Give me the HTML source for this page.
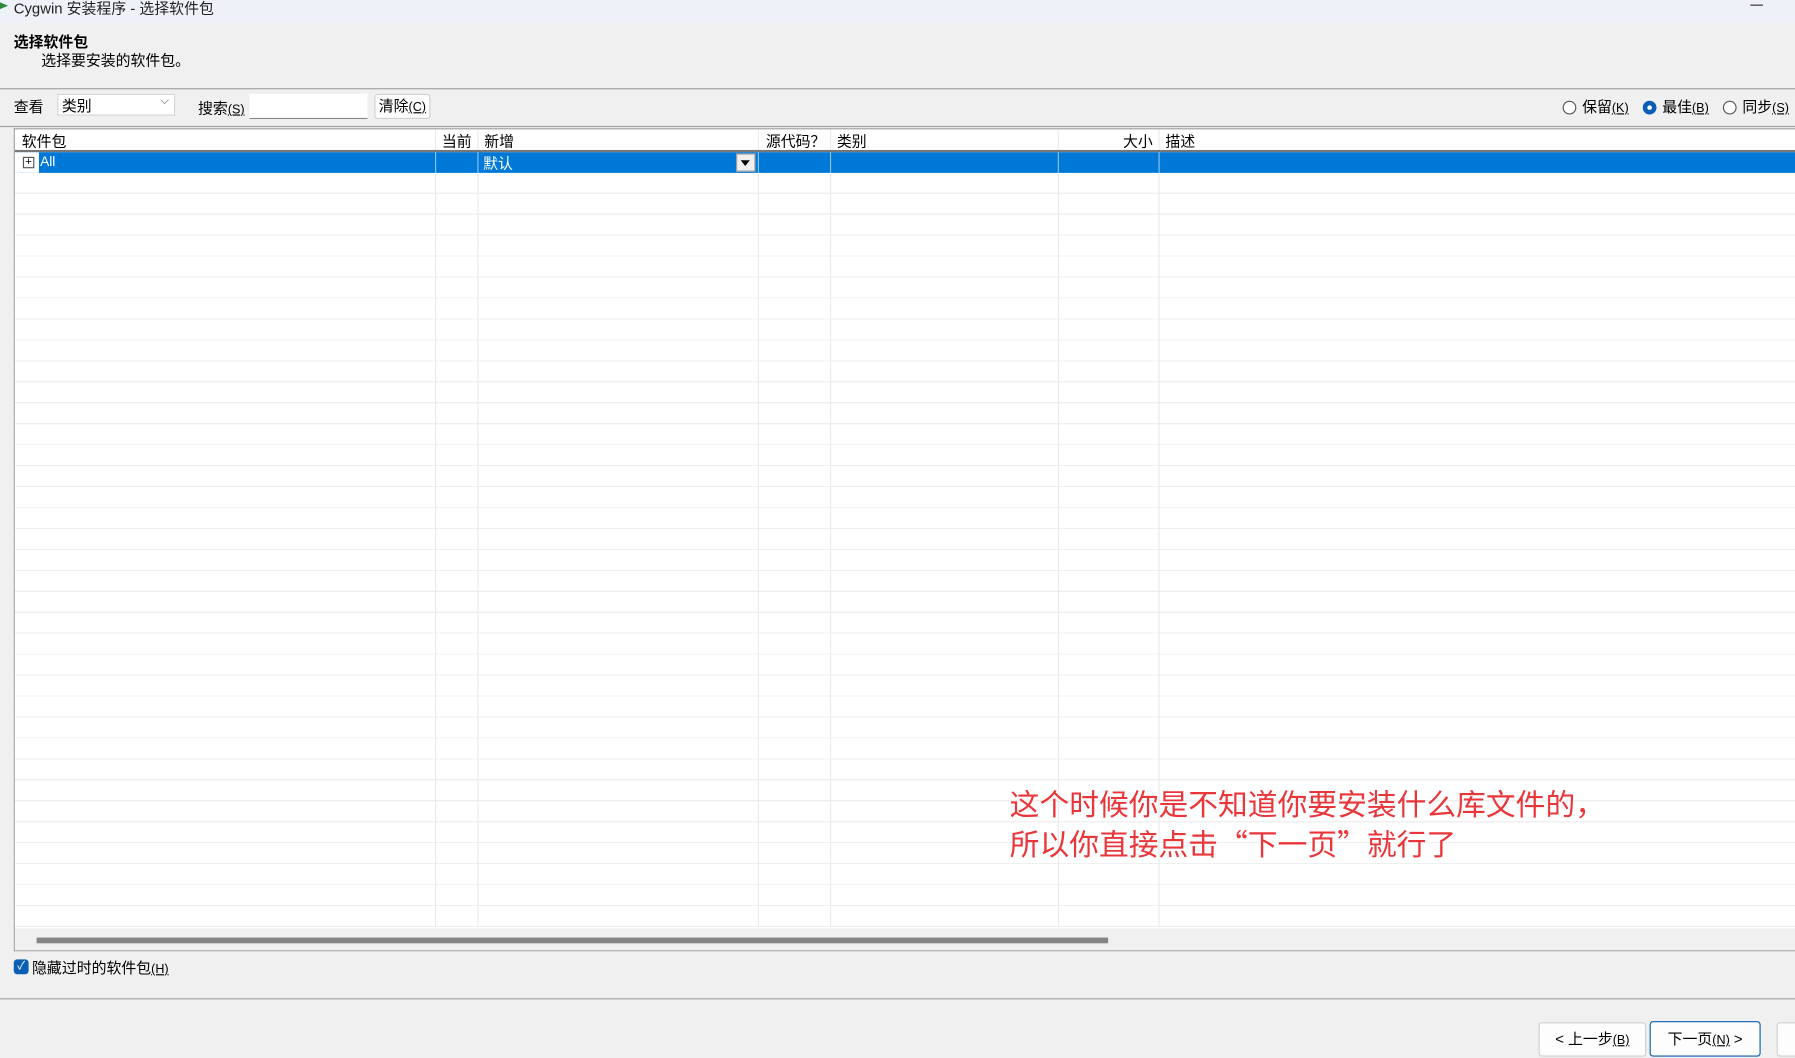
<!DOCTYPE html>
<html><head><meta charset="utf-8"><style>
html,body{margin:0;padding:0;width:1795px;height:1053px;overflow:hidden;background:#f0f0f0}
#w{position:absolute;left:0;top:0;width:1568px;height:920px;transform:scale(1.14477);transform-origin:0 0;font-family:"Liberation Sans","Microsoft YaHei","Noto Sans CJK SC",sans-serif;font-size:13px;color:#000;background:#f0f0f0}
.a{position:absolute;white-space:nowrap}
.u{text-decoration:underline;font-size:11px}
.radio{position:absolute;width:12px;height:12px;border:1px solid #555;border-radius:50%;background:#fff;box-sizing:border-box}
.col{position:absolute;top:113px;height:697px;width:1px;background:#eaeaea}
.btn{position:absolute;background:#fdfdfd;border:1px solid #d0d0d0;border-radius:3px;box-sizing:border-box;text-align:center}
</style></head><body><div id="w">
<div class="a" style="left:0;top:0;width:1568px;height:20px;background:#eef1f7"></div>
<div class="a" style="left:0;top:2px;width:7px;height:6px;background:#2a8a3a;clip-path:polygon(0 0,100% 50%,0 100%)"></div>
<div class="a" style="left:12px;top:-3px;font-size:13px;color:#222">Cygwin 安装程序 - 选择软件包</div>
<div class="a" style="left:1529px;top:4px;width:11px;height:1px;background:#333"></div>
<div class="a" style="left:12px;top:26px;font-weight:bold">选择软件包</div>
<div class="a" style="left:36px;top:42px">选择要安装的软件包。</div>
<div class="a" style="left:0;top:77px;width:1568px;height:1px;background:#a0a0a0"></div>
<div class="a" style="left:12px;top:83px">查看</div>
<div class="a" style="left:50px;top:82px;width:103px;height:19px;background:#fff;border:1px solid #d5d5d5;box-sizing:border-box"></div>
<div class="a" style="left:54px;top:82px">类别</div>
<div class="a" style="left:140px;top:83px;font-size:10px;color:#666">⌵</div>
<div class="a" style="left:173px;top:84px">搜索<span class="u">(S)</span></div>
<div class="a" style="left:218px;top:82px;width:103px;height:22px;background:#fff;border-bottom:1px solid #888;box-sizing:border-box"></div>
<div class="btn" style="left:327px;top:82px;width:49px;height:22px;line-height:20px">清除<span class="u">(C)</span></div>
<div class="radio" style="left:1365px;top:88px"></div><div class="a" style="left:1382px;top:83px">保留<span class="u">(K)</span></div>
<div class="radio" style="left:1435px;top:88px;border:4px solid #0a5fb4"></div><div class="a" style="left:1452px;top:83px">最佳<span class="u">(B)</span></div>
<div class="radio" style="left:1505px;top:88px"></div><div class="a" style="left:1522px;top:83px">同步<span class="u">(S)</span></div>
<div class="a" style="left:0;top:110px;width:1568px;height:1px;background:#a0a0a0"></div>
<div class="a" style="left:12px;top:112px;width:1556px;height:719px;background:#fff;border-left:1px solid #a0a0a0;border-top:1px solid #a0a0a0;border-bottom:1px solid #a0a0a0;box-sizing:border-box"></div>
<div class="a" style="left:13px;top:151px;width:1555px;height:659px;background:repeating-linear-gradient(#fff 0,#fff 17.3px,#f0f0f0 17.3px,#f0f0f0 18.3px)"></div>
<div class="col" style="left:380px"></div><div class="col" style="left:417px"></div><div class="col" style="left:662px"></div><div class="col" style="left:725px"></div><div class="col" style="left:924px"></div><div class="col" style="left:1012px"></div>
<div class="a" style="left:13px;top:131px;width:1555px;height:2px;background:#777"></div>
<div class="a" style="left:13px;top:133px;width:1555px;height:18px;background:#0078d7"></div>
<div class="a" style="left:380px;top:133px;width:1px;height:18px;background:#8ec1ee"></div>
<div class="a" style="left:417px;top:133px;width:1px;height:18px;background:#8ec1ee"></div>
<div class="a" style="left:662px;top:133px;width:1px;height:18px;background:#8ec1ee"></div>
<div class="a" style="left:725px;top:133px;width:1px;height:18px;background:#8ec1ee"></div>
<div class="a" style="left:924px;top:133px;width:1px;height:18px;background:#8ec1ee"></div>
<div class="a" style="left:1012px;top:133px;width:1px;height:18px;background:#8ec1ee"></div>
<div class="a" style="left:13px;top:133px;width:21px;height:18px;background:#fff"></div>
<div class="a" style="left:20px;top:137px;width:10px;height:10px;border:1px solid #555;box-sizing:border-box;font-size:10px;line-height:8px;text-align:center">+</div>
<div class="a" style="left:35px;top:134px;color:#fff;font-size:12px">All</div>
<div class="a" style="left:422px;top:132px;color:#fff">默认</div>
<div class="a" style="left:643px;top:134px;width:17px;height:16px;background:#f0f0f0;border:1px solid #999;box-sizing:border-box"></div>
<div class="a" style="left:647px;top:140px;width:0;height:0;border-left:4px solid transparent;border-right:4px solid transparent;border-top:5px solid #000"></div>
<div class="a" style="left:19px;top:113px">软件包</div>
<div class="a" style="left:386px;top:113px">当前</div>
<div class="a" style="left:423px;top:113px">新增</div>
<div class="a" style="left:669px;top:113px">源代码？</div>
<div class="a" style="left:731px;top:113px">类别</div>
<div class="a" style="left:981px;top:113px">大小</div>
<div class="a" style="left:1018px;top:113px">描述</div>
<div class="a" style="left:13px;top:811px;width:1555px;height:19px;background:#f0f0f0"></div>
<div class="a" style="left:32px;top:819px;width:936px;height:5px;background:#858585"></div>
<div class="a" style="left:12px;top:838px;width:13px;height:13px;background:#0a5fb4;border-radius:3px;color:#fff;font-size:10px;line-height:13px;text-align:center">✓</div>
<div class="a" style="left:28px;top:835px">隐藏过时的软件包<span class="u">(H)</span></div>
<div class="a" style="left:0;top:872px;width:1568px;height:1px;background:#a0a0a0"></div>
<div class="btn" style="left:1344px;top:893px;width:94px;height:30px;line-height:28px">&lt; 上一步<span class="u">(B)</span></div>
<div class="btn" style="left:1441px;top:892px;width:97px;height:31px;line-height:29px;border:1px solid #0a5fb4">下一页<span class="u">(N)</span> &gt;</div>
<div class="btn" style="left:1552px;top:893px;width:30px;height:30px"></div>
<div class="a" style="left:882px;top:684px;font-family:'Noto Sans CJK SC','Liberation Sans',sans-serif;font-size:26px;line-height:35px;color:#e8363a;white-space:pre">这个时候你是不知道你要安装什么库文件的，
所以你直接点击“下一页”就行了</div>
</div></body></html>
